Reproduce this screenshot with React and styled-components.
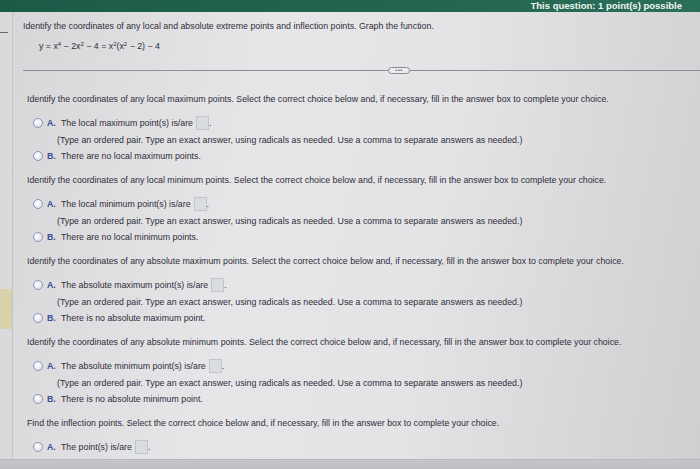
import styled, { createGlobalStyle } from 'styled-components';

const GlobalStyle = createGlobalStyle`
  html, body {
    margin: 0;
    padding: 0;
  }
  body {
    font-family: "Liberation Sans", Arial, sans-serif;
  }
`;

const Page = styled.div`
  width: 700px;
  height: 469px;
  overflow: hidden;
  display: flex;
  flex-direction: column;
  background: linear-gradient(100deg, #d6d6d8 0%, #e6e6e8 35%, #e4e4e6 60%, #cfcfd2 100%);
`;

const TopBar = styled.div`
  height: 12px;
  flex-shrink: 0;
  background: linear-gradient(90deg, #1c5a48 0%, #22664f 60%, #2a6f5a 100%);
  display: flex;
  align-items: center;
  justify-content: flex-end;
  padding-right: 18px;
  overflow: hidden;
`;

const TopBarText = styled.span`
  color: #f2f4f2;
  font-size: 9.5px;
  font-weight: 700;
  line-height: 12px;
  white-space: nowrap;
`;

const Body = styled.div`
  flex: 1;
  display: flex;
  min-height: 0;
`;

const LeftRail = styled.div`
  width: 12px;
  flex-shrink: 0;
  border-right: 1px solid #c4c4c8;
  background: #dadadc;
  display: flex;
  flex-direction: column;
`;

const RailMark = styled.div`
  width: 8px;
  height: 1px;
  background: #666;
  margin-top: 20px;
`;

const RailHighlight = styled.div`
  height: 40px;
  margin-top: 256px;
  background: #d9d0ac;
`;

const Content = styled.div`
  flex: 1;
  display: flex;
  flex-direction: column;
  padding: 8px 0 0 10px;
  color: #2e2e3a;
  font-size: 8.8px;
  line-height: 12px;
`;

const Title = styled.div`
  white-space: nowrap;
`;

const Formula = styled.div`
  margin: 8px 0 0 16px;
  white-space: nowrap;
`;

const Sup = styled.sup`
  font-size: 6px;
  line-height: 0;
  vertical-align: 3px;
`;

const Divider = styled.div`
  margin: 18px 0 0 0;
  height: 1px;
  background: #8e8e94;
  position: relative;
`;

const Ellipsis = styled.div`
  position: absolute;
  left: 365px;
  top: -3px;
  width: 20px;
  height: 5px;
  border: 1px solid #8a8a90;
  border-radius: 4px;
  background: #ececee;
  font-size: 6px;
  line-height: 4px;
  text-align: center;
  color: #666;
  letter-spacing: 0.5px;
`;

const Sections = styled.div`
  display: flex;
  flex-direction: column;
  gap: 12px;
  margin-top: 22px;
  padding-left: 4px;
`;

const Section = styled.div`
  display: flex;
  flex-direction: column;
`;

const Prompt = styled.div`
  white-space: nowrap;
`;

const Option = styled.div`
  display: flex;
  align-items: center;
  height: 12px;
  margin-top: ${(p) => p.$gap}px;
  padding-left: 6px;
  white-space: nowrap;
`;

const Radio = styled.span`
  width: 8px;
  height: 8px;
  border-radius: 50%;
  border: 1px solid #8a95b8;
  background: radial-gradient(circle at 40% 35%, #ffffff 0%, #e4e6ee 70%, #cfd3df 100%);
  flex-shrink: 0;
`;

const Letter = styled.span`
  color: #3b4b94;
  font-weight: 700;
  width: 14px;
  margin-left: 4px;
  flex-shrink: 0;
`;

const AnswerBox = styled.span`
  display: inline-block;
  width: 11px;
  height: 12px;
  margin-left: 3px;
  border: 1px solid #c2c6cc;
  background: #d9dce0;
`;

const Hint = styled.div`
  margin-top: 5px;
  padding-left: 30px;
  white-space: nowrap;
`;

const BottomEdge = styled.div`
  height: 9px;
  flex-shrink: 0;
  background: linear-gradient(180deg, #c6c6ca, #bdbdc2);
  border-top: 1px solid #b6b6bb;
`;

const hint =
  '(Type an ordered pair. Type an exact answer, using radicals as needed. Use a comma to separate answers as needed.)';
const tail =
  ' Select the correct choice below and, if necessary, fill in the answer box to complete your choice.';

const sections = [
  {
    prompt: 'Identify the coordinates of any local maximum points.',
    a: 'The local maximum point(s) is/are',
    b: 'There are no local maximum points.',
  },
  {
    prompt: 'Identify the coordinates of any local minimum points.',
    a: 'The local minimum point(s) is/are',
    b: 'There are no local minimum points.',
  },
  {
    prompt: 'Identify the coordinates of any absolute maximum points.',
    a: 'The absolute maximum point(s) is/are',
    b: 'There is no absolute maximum point.',
  },
  {
    prompt: 'Identify the coordinates of any absolute minimum points.',
    a: 'The absolute minimum point(s) is/are',
    b: 'There is no absolute minimum point.',
  },
];

const App = () => {
  return (
    <>
      <GlobalStyle />
      <Page>
        <TopBar>
          <TopBarText>This question: 1 point(s) possible</TopBarText>
        </TopBar>
        <Body>
          <LeftRail>
            <RailMark />
            <RailHighlight />
          </LeftRail>
          <Content>
            <Title>
              Identify the coordinates of any local and absolute extreme points and inflection
              points. Graph the function.
            </Title>
            <Formula>
              y = x<Sup>4</Sup> − 2x<Sup>2</Sup> − 4 = x<Sup>2</Sup>(x<Sup>2</Sup> − 2) − 4
            </Formula>
            <Divider>
              <Ellipsis>•••</Ellipsis>
            </Divider>
            <Sections>
              {sections.map((s) => (
                <Section key={s.prompt}>
                  <Prompt>
                    {s.prompt}
                    {tail}
                  </Prompt>
                  <Option $gap={12}>
                    <Radio />
                    <Letter>A.</Letter>
                    {s.a}
                    <AnswerBox />.
                  </Option>
                  <Hint>{hint}</Hint>
                  <Option $gap={4}>
                    <Radio />
                    <Letter>B.</Letter>
                    {s.b}
                  </Option>
                </Section>
              ))}
              <Section>
                <Prompt>
                  Find the inflection points.
                  {tail}
                </Prompt>
                <Option $gap={12}>
                  <Radio />
                  <Letter>A.</Letter>
                  The point(s) is/are
                  <AnswerBox />.
                </Option>
              </Section>
            </Sections>
          </Content>
        </Body>
        <BottomEdge />
      </Page>
    </>
  );
};

export default App;
